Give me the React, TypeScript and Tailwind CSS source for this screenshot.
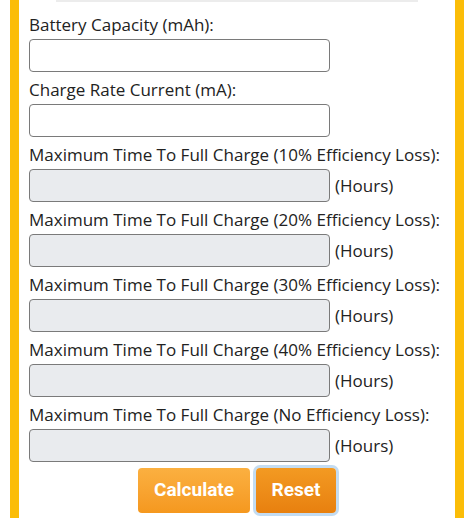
import React from "react";

const font = { fontFamily: '"Open Sans", "Liberation Sans", sans-serif' };

const Field = ({ label, output }: { label: string; output?: boolean }) => (
  <div className="mb-[5.5px]">
    <label className="block text-[17px] leading-[24px] text-[#222] mb-[2.5px]">{label}</label>
    <div className="flex items-center gap-[5px]">
      <input
        readOnly={output}
        className={`w-[301px] h-[33px] rounded-[4px] border border-[#7a7a7a] outline-none ${
          output ? "bg-[#e9ebee]" : "bg-white"
        }`}
      />
      {output && <span className="text-[17px] leading-[24px] text-[#222]">(Hours)</span>}
    </div>
  </div>
);

export default function App() {
  return (
    <div className="bg-white h-[518px] overflow-hidden px-[10px]" style={font}>
      <div className="h-full border-x-[9px] border-[#fbbd08] px-[10px]">
        <div className="mx-[27px] h-[2px] bg-[#ececec]" />
        <div className="pt-[10.5px]">
          <Field label="Battery Capacity (mAh):" />
          <Field label="Charge Rate Current (mA):" />
          <Field label="Maximum Time To Full Charge (10% Efficiency Loss):" output />
          <Field label="Maximum Time To Full Charge (20% Efficiency Loss):" output />
          <Field label="Maximum Time To Full Charge (30% Efficiency Loss):" output />
          <Field label="Maximum Time To Full Charge (40% Efficiency Loss):" output />
          <Field label="Maximum Time To Full Charge (No Efficiency Loss):" output />
        </div>
        <div className="flex justify-center gap-[6px] mt-[2px]" style={{ fontFamily: 'Roboto, "Liberation Sans", sans-serif' }}>
          <button className="h-[45px] w-[112px] rounded-[4px] bg-gradient-to-b from-[#fbb040] to-[#f5981e] text-white font-bold text-[19px]">
            Calculate
          </button>
          <button className="h-[45px] w-[80px] rounded-[4px] bg-gradient-to-b from-[#f39a22] to-[#e8800e] text-white font-bold text-[19px] ring-[3px] ring-[#c3dcf2]">
            Reset
          </button>
        </div>
      </div>
    </div>
  );
}
